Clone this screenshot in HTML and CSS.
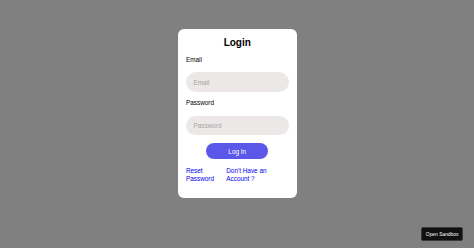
FILE: index.html
```html
<!DOCTYPE html>
<html lang="en">
<head>
<meta charset="utf-8">
<title>Login</title>
<link rel="stylesheet" href="styles.css">
</head>
<body>
<main class="page">
  <form class="card">
    <h1 class="title">Login</h1>
    <label class="label" for="email">Email</label>
    <input class="field" id="email" type="email" placeholder="Email">
    <label class="label" for="password">Password</label>
    <input class="field" id="password" type="password" placeholder="Password">
    <div class="actions"><button class="btn" type="button">Log In</button></div>
    <div class="links">
      <a class="link" href="#">Reset Password</a>
      <a class="link" href="#">Don't Have an Account ?</a>
    </div>
  </form>
</main>
<button class="sandbox" type="button">Open Sandbox</button>
</body>
</html>
```
FILE: styles.css
```css
html, body {
  margin: 0;
  padding: 0;
}
body {
  background: #808080;
  font-family: "Liberation Sans", Arial, sans-serif;
  width: 474px;
  height: 248px;
  overflow: hidden;
}
.page {
  padding-top: 29px;
  display: flex;
  justify-content: center;
}
.card {
  box-sizing: border-box;
  width: 119px;
  height: 169px;
  margin-left: 0.5px;
  background: #fff;
  border-radius: 6px;
  padding: 7.5px 8.2px 0;
  display: flex;
  flex-direction: column;
}
.title {
  margin: 0 0 7.8px;
  font-size: 10px;
  line-height: 12px;
  font-weight: bold;
  text-align: center;
  color: #000;
}
.label {
  display: block;
  font-size: 6.4px;
  line-height: 8px;
  color: #000;
  margin-bottom: 8.2px;
}
.field {
  box-sizing: border-box;
  display: block;
  width: 100%;
  height: 19.4px;
  margin: 0 0 7.5px;
  border: none;
  outline: none;
  border-radius: 10px;
  background: #ece8e8;
  padding: 0 7.5px;
  font-family: inherit;
  font-size: 6.4px;
  color: #333;
}
.field::placeholder {
  color: #a8a4a4;
}
.actions {
  display: flex;
  justify-content: center;
  margin-top: 0.8px;
}
.btn {
  width: 61.7px;
  height: 15.7px;
  border: none;
  border-radius: 8px;
  background: #5b57e9;
  color: #fff;
  font-family: inherit;
  font-size: 6.4px;
  padding: 0;
}
.links {
  display: grid;
  grid-template-columns: 40.3px 1fr;
  margin-top: 8.3px;
  font-size: 6.4px;
  line-height: 7.5px;
}
.link {
  color: #0000ee;
  text-decoration: none;
}
.sandbox {
  position: fixed;
  right: 10.7px;
  bottom: 7px;
  width: 42.3px;
  height: 14px;
  padding: 0;
  background: #111;
  border: 1px solid #3a3a3a;
  border-radius: 2px;
  color: #fff;
  font-family: inherit;
  font-size: 4.9px;
}
```
